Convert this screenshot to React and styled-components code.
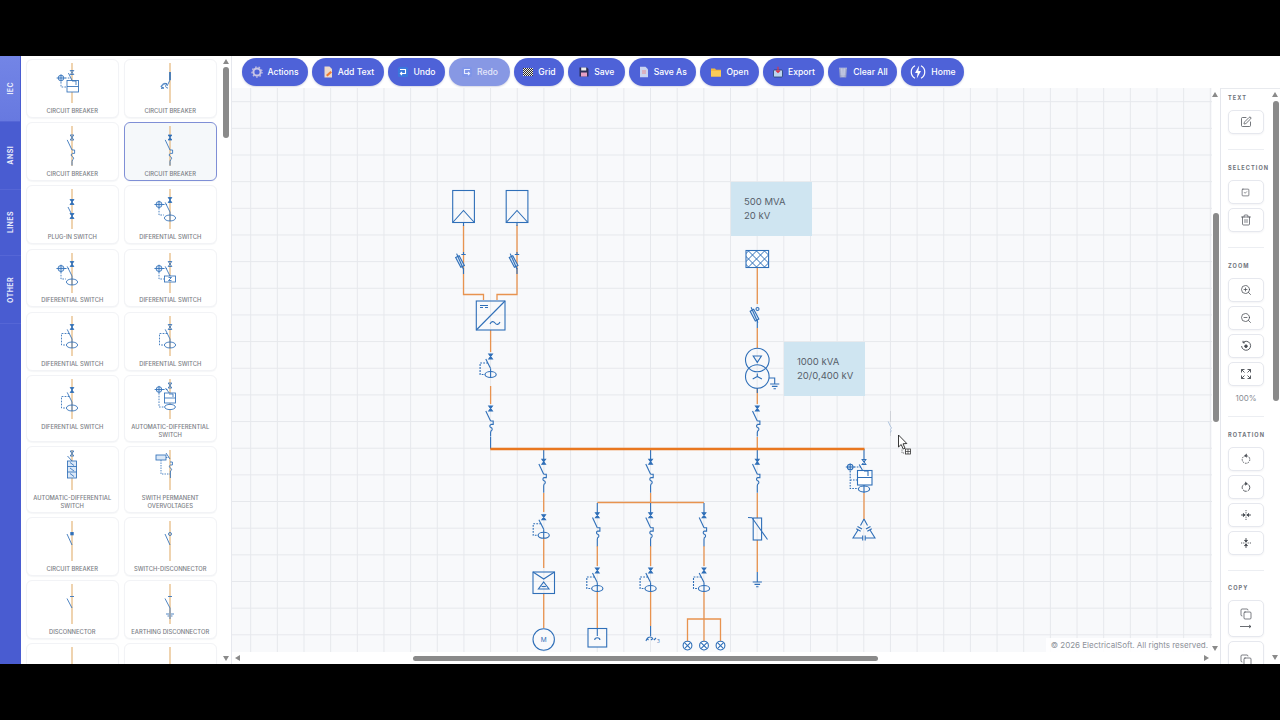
import React from "react";
import styled, { createGlobalStyle } from "styled-components";
import { SquarePen, SquareCheck, Trash2, ZoomIn, ZoomOut, Copy } from "lucide-react";

const BLUE = "#2f6fb8";
const ORANGE = "#e8934f";
const FONT = `Inter, "Liberation Sans", sans-serif`;

const Global = createGlobalStyle`
  html, body { margin: 0; padding: 0; background: #000; }
  body { font-family: ${FONT}; }
  #root { width: 1280px; height: 720px; overflow: hidden; }
`;

const Page = styled.div`
  width: 1280px; height: 720px; background: #000; padding: 56px 0; box-sizing: border-box;
`;
const Frame = styled.div`
  display: flex; height: 608px; background: #fff; overflow: hidden;
`;
const Tabs = styled.nav`
  width: 21px; flex: none; background: #495cd1; display: flex; flex-direction: column;
`;
const Tab = styled.div`
  height: ${p => p.$h}px; width: ${p => (p.$active ? 20 : 21)}px; flex: none;
  background: ${p => (p.$active ? "linear-gradient(#7385e6,#6779e0)" : "#495cd1")};
  border-bottom: 1px solid #5566d6; box-sizing: border-box;
  display: flex; align-items: center; justify-content: center;
`;
const TabLabel = styled.span`
  writing-mode: vertical-rl; transform: rotate(180deg);
  color: #e9ecfb; font-size: 7px; font-weight: 700; letter-spacing: .4px;
`;
const Palette = styled.aside`
  position: relative; width: 211px; flex: none; overflow: hidden; background: #fff;
  border-right: 1px solid #e6e8ee; box-sizing: border-box;
`;
const CardGrid = styled.div`
  display: grid; grid-template-columns: 93.5px 93.5px; column-gap: 4.5px; row-gap: 4.4px;
  padding: 3px 0 0 4.5px; align-items: stretch;
`;
const Card = styled.div`
  background: ${p => (p.$selected ? "#f5f8fa" : "#fff")};
  border: 1px solid ${p => (p.$selected ? "#7f8fd6" : "#f2f3f6")};
  border-radius: 6px; box-sizing: border-box; padding: 3px 2px 1.8px;
  display: flex; flex-direction: column; align-items: center;
  box-shadow: 0 1px 1px rgba(30,40,80,.04);
  min-height: 58.8px;
`;
const CardLabel = styled.div`
  margin-top: 3.8px; font-size: 5.8px; line-height: 8px; color: #7b7e85; text-align: center;
  font-weight: 500; letter-spacing: 0; text-transform: uppercase;
`;
const Workspace = styled.main`
  flex: 1; min-width: 0; display: flex; flex-direction: column;
`;
const Toolbar = styled.div`
  height: 32px; flex: none; display: flex; align-items: center; gap: 4px; padding: 0 0 0 10px;
  background: #fff; box-sizing: border-box;
`;
const ToolButton = styled.button`
  width: ${p => p.$w}px; height: 28px; flex: none; border: 0; border-radius: 14px; padding: 0;
  background: ${p => (p.$dim ? "#8798e4" : "#4e62d8")}; color: ${p => (p.$dim ? "#e3e7fa" : "#fff")};
  font: 500 8.6px ${FONT}; display: flex; align-items: center; justify-content: center; gap: 4px;
  box-shadow: 0 1px 2px rgba(40,50,120,.2);
`;
const WorkRow = styled.div`
  flex: 1; min-height: 0; display: flex;
`;
const Canvas = styled.div`
  position: relative; flex: 1; min-width: 0; overflow: hidden; background-color: #f8f9fb;
  background-image: linear-gradient(to right, #e6e8ec 1px, transparent 1px),
    linear-gradient(to bottom, #e6e8ec 1px, transparent 1px);
  background-size: 26.667px 26.667px;
  background-position: 18.2px 13.2px;
  border-right: 8px solid #fff; border-bottom: 0;
`;
const Drawing = styled.svg`
  position: absolute; left: 0; top: 0; display: block;
`;
const Note = styled.div`
  position: absolute; left: ${p => p.$x}px; top: ${p => p.$y}px; width: 80.5px; height: 54px;
  background: #cfe5f1; color: #56606a; font-size: 9.5px; line-height: 14px;
  padding: 12.5px 0 0 13px; box-sizing: border-box; white-space: pre;
`;
const Copyright = styled.div`
  position: absolute; right: 0; bottom: 12px; height: 14px; padding: 0 4px 0 5px;
  background: rgba(255,255,255,.85); color: #8d9199; font-size: 8px; line-height: 14px; white-space: nowrap;
`;
const HBar = styled.div`
  position: absolute; left: 0; right: 0; bottom: 0; height: 12px; background: #fff;
`;
const HThumb = styled.div`
  position: absolute; left: 181px; top: 4px; width: 465px; height: 5px; border-radius: 3px; background: #8a8a8a;
`;
const Thumb = styled.div`
  position: absolute; left: ${p => p.$x}px; top: ${p => p.$y}px; width: 6px; height: ${p => p.$h}px;
  border-radius: 3px; background: #8a8a8a;
`;
const Arrow = styled.div`
  position: absolute; left: ${p => p.$x}px; top: ${p => p.$y}px; width: 0; height: 0;
  border-left: 3.5px solid transparent; border-right: 3.5px solid transparent;
  ${p => (p.$down ? "border-top: 5px solid #8a8a8a;" : "border-bottom: 5px solid #8a8a8a;")}
`;
const ArrowRight = styled.div`
  position: absolute; left: ${p => p.$x}px; top: ${p => p.$y}px; width: 0; height: 0;
  border-top: 3.5px solid transparent; border-bottom: 3.5px solid transparent;
  ${p => (p.$left ? "border-right: 5px solid #8a8a8a;" : "border-left: 5px solid #8a8a8a;")}
`;
const Panel = styled.aside`
  position: relative; width: 60px; flex: none; background: #fff; overflow: hidden;
  border-left: 1px solid #e4e6ec; border-top: 1px solid #e8eaee; box-sizing: border-box; padding: 5px 16px 0 7px;
`;
const Section = styled.section`
  padding-bottom: ${p => (p.$last ? 0 : 15)}px; margin-bottom: ${p => (p.$tight ? 13 : 14)}px;
  border-bottom: ${p => (p.$last ? "none" : "1px solid #eceef2")};
  display: flex; flex-direction: column; gap: 4px;
`;
const SectionTitle = styled.div`
  font-size: 5.6px; line-height: 8px; font-weight: 700; letter-spacing: 1.05px; color: #70747c;
  margin-bottom: 4px; white-space: nowrap;
`;
const PanelButton = styled.button`
  width: 35.5px; height: ${p => p.$h || 24}px; flex: none; padding: 0; background: #fff;
  border: 1px solid #e6e8ee; border-radius: 5px; display: flex; flex-direction: column;
  align-items: center; justify-content: center; gap: 4px; color: #454950;
  box-shadow: 0 1px 2px rgba(30,40,80,.05);
`;
const ZoomValue = styled.div`
  height: 12px; margin-top: 2px; margin-bottom: -3px; font-size: 8px; line-height: 12px; color: #8a8d94; text-align: center;
`;

/* ---------- electrical symbols ---------- */
const Mark = ({ x, y, filled }) => (
  <path d={`M${x - 1.8} ${y - 2.5}h3.6l-3.6 5h3.6z`} fill={filled ? BLUE : "none"} />
);
const Blade = ({ x, y, e = 12 }) => <path d={`M${x - 4.8} ${y + 2.4}L${x} ${y + e}`} />;
const Thermal = ({ x, y, end = 31 }) => (
  <path d={`M${x} ${y + 12.5}h2.6v3.4h-2.2c-1.6.6-1.6 2.6 0 3.2c1.6.6 1.6 2.8 0 3.4L${x} ${y + 24}V${y + end}`} />
);
const Breaker = ({ x, y, filled = true, end }) => (
  <g>
    <Mark x={x} y={y} filled={filled} />
    <Blade x={x} y={y} e={12.5} />
    <Thermal x={x} y={y} end={end} />
  </g>
);
const Rcd = ({ x, y, filled = true, dashed = true }) => (
  <g>
    <Mark x={x} y={y} filled={filled} />
    <Blade x={x} y={y} />
    <path d={`M${x} ${y + 12}V${y + 21}`} />
    <ellipse cx={x} cy={y + 18} rx="5.6" ry="3" fill="none" />
    {dashed && <path d={`M${x - 2.6} ${y + 6.5}H${x - 10.5}V${y + 18}H${x - 5.6}`} strokeDasharray="1.8 1.2" />}
  </g>
);
const Fuse = ({ x, y }) => (
  <g>
    <rect x={x - 2} y={y} width="4" height="11" transform={`rotate(-28 ${x} ${y + 5.5})`} fill="#d8e6f6" />
    <path d={`M${x - 3.4} ${y - 2.4}L${x + 3.4} ${y + 13}`} />
  </g>
);
const CrossCircle = ({ x, y, r = 3.4 }) => (
  <g>
    <circle cx={x} cy={y} r={r} fill="#d8e6f6" />
    <path d={`M${x - r - 1.6} ${y}h${2 * r + 3.2}M${x} ${y - r - .8}v${2 * r + 1.6}`} />
  </g>
);
const Earth = ({ x, y }) => <path d={`M${x - 4.6} ${y}h9.2M${x - 2.8} ${y + 2.4}h5.6M${x - 1.2} ${y + 4.8}h2.4`} />;
const Lamp = ({ x, y }) => (
  <g>
    <circle cx={x} cy={y} r="4.4" fill="#fff" />
    <path d={`M${x - 3} ${y - 3}l6 6M${x + 3} ${y - 3}l-6 6`} />
  </g>
);

const orangeWires = [
  "M463.5 225V294.5H483.5V300", "M517 225V294.5H497V300", "M490.6 330V352", "M490.6 386V404",
  "M757.3 268V304", "M757.3 328V348", "M757.3 388V404", "M757.3 437V449",
  "M543.7 493V512", "M543.7 537V568", "M543.7 593V628",
  "M597.3 502.5H704", "M650.6 493V503", "M597.3 546V566", "M597.3 591V628",
  "M650.6 546V566", "M650.6 591V626", "M704 546V566", "M704 591V641",
  "M687.5 641V619H720.5V641", "M757.3 493V518", "M757.3 540V572", "M864 493V519",
];
const blueWires = [
  "M463.5 222V226", "M517 222V226",
  "M463.5 268V274", "M517 268V274",
  "M543.7 449V460", "M650.6 449V460", "M757.3 449V460", "M864 449V460",
  "M757.3 320V328", "M757.3 572V582", "M650.6 626V636",
  "M597.3 503V513", "M704 503V513", "M650.6 503V513",
  "M490.6 437V449", "M757.3 388V393",
];
const meshLines = [-14, -6, 2, 10, 18, 26, 34].map(k => `M${746 + k} 250.5l17 17M${746 + k + 17} 250.5l-17 17`).join("");

const SchematicDrawing = () => (
  <Drawing width="980" height="576" viewBox="232 88 980 576">
    <defs>
      <clipPath id="mesh"><rect x="746" y="250.5" width="22.6" height="17" /></clipPath>
    </defs>
    <g fill="none" stroke={ORANGE} strokeWidth="1.3">
      {orangeWires.map((d, i) => <path key={i} d={d} />)}
    </g>
    <g fill="none" stroke={BLUE} strokeWidth="1.1">
      {blueWires.map((d, i) => <path key={i} d={d} />)}
      {/* PV generators */}
      <rect x="452.7" y="190.5" width="21.7" height="32" />
      <path d="M452.7 222.5L463.5 210.5L474.4 222.5" />
      <rect x="506.2" y="190.5" width="21.7" height="32" />
      <path d="M506.2 222.5L517 210.5L527.9 222.5" />
      <path d="M463.5 252v2M461.3 254.5h4.4M517 252v2M514.8 254.5h4.4" />
      <Fuse x={460} y={256} />
      <Fuse x={513.6} y={256} />
      {/* Inverter */}
      <rect x="476.3" y="301" width="28.7" height="29" />
      <path d="M476.3 330L505 301" />
      <path d="M480 305.5h8M480 307.5h3M485 307.5h3" />
      <path d="M490 324c1.5-3 3.5-3 5-1s3.5 2 5-1" />
      <Rcd x={490.6} y={356.5} />
      <Breaker x={490.6} y={408.5} end={28} />
      {/* Source branch */}
      <rect x="746" y="250.5" width="22.6" height="17" fill="#fff" />
      <path d={meshLines} clipPath="url(#mesh)" strokeWidth="1" />
      <circle cx="757.5" cy="309" r="1.5" />
      <Fuse x={754.5} y={309.6} />
      <circle cx="757.3" cy="360" r="11.8" />
      <circle cx="757.3" cy="376.5" r="11.8" />
      <path d="M753.2 356h8.2l-4.1 6.4z" />
      <path d="M757.3 376.5v-3M757.3 376.5l-4.6 2.6M757.3 376.5l4.6 2.6M769 378H774.7V384" />
      <Earth x={774.7} y={384} />
      <Breaker x={757.3} y={408.5} end={28} />
      {/* Column A */}
      <Breaker x={543.7} y={461.7} />
      <Rcd x={543.7} y={517.3} />
      <rect x="533" y="572" width="21.5" height="21.5" />
      <path d="M533 572L543.7 579L554.5 572" />
      <path d="M543.7 582l5.3 7h-10.6z" />
      <path d="M541.5 586.5h4.4" />
      <circle cx="543.7" cy="639.5" r="10.7" fill="#f8f9fb" />
      {/* Column B */}
      <Breaker x={597.3} y={515.2} />
      <Rcd x={597.3} y={570.5} />
      <rect x="588" y="628.5" width="18.7" height="18.5" fill="#f8f9fb" />
      <path d="M597.3 628.5V636M594.7 640c0-3 5.2-3 5.2 0" />
      {/* Column C */}
      <Breaker x={650.6} y={461.7} />
      <Breaker x={650.6} y={515.2} />
      <Rcd x={650.6} y={570.5} />
      <path d="M646 641c1-4 3-4 4.6-4M650.6 637c1 0 2 1 2.5 2.5M654 640l2-2M647.5 639l1 1M651 639l1 1" />
      {/* Column D */}
      <Breaker x={704} y={515.2} />
      <Rcd x={704} y={570.5} />
      <Lamp x={687.5} y={645.6} />
      <Lamp x={704} y={645.6} />
      <Lamp x={720.5} y={645.6} />
      {/* Column E */}
      <Breaker x={757.3} y={461.7} />
      <rect x="753.2" y="518" width="8.4" height="22" />
      <path d="M748 517.5l4 .2L767.5 539.5" />
      <Earth x={757.3} y={582} />
      {/* Column F */}
      <path d="M862.2 459.5h3.6l-3.6 5h3.6z" />
      <path d="M859.2 464.5L864 473V471" />
      <CrossCircle x={850.2} y={467} r={2.8} />
      <path d="M854 467H861M850.2 471V488.5H858.4M850.2 480H857" strokeDasharray="1.6 1.2" />
      <rect x="857.5" y="470.5" width="14.5" height="14.5" fill="#fff" />
      <path d="M857.5 477.5H872M864 471h4v5" />
      <path d="M864 485V493" />
      <ellipse cx="864" cy="489" rx="5.6" ry="3" />
      <path d="M864 519L860.5 525.5M858 530L853 538H862.7M865.2 538H875L870 530M867.5 525.5L864 519" />
      <path d="M857.5 526.5L862 529M856.2 528.7L860.7 531.2M870.5 526.5L866 529M871.8 528.7L867.3 531.2M862.7 535.5V540.5M865.2 535.5V540.5" />
    </g>
    <path d="M490.3 449H864.5" stroke="#e9771f" strokeWidth="2.6" fill="none" />
    <text x="543.7" y="642" fontSize="6.5" textAnchor="middle" fill={BLUE} fontFamily={FONT}>M</text>
    <text x="657" y="643" fontSize="4.5" fill={BLUE} fontFamily={FONT}>3</text>
    {/* ghost being dragged */}
    <g fill="none" strokeWidth=".8">
      <path d="M890.5 411V422M890.5 431V436" stroke="#c9ccd2" />
      <path d="M888.2 421.5L890.5 426.5c2 1 .5 2 0 3c1 1 .5 2 0 3" stroke="#9db8d8" />
    </g>
    {/* pointer */}
    <path d="M898.5 435V447L901.2 444.5L903.2 449L905 448.2L903 443.8L906.8 443.5Z" fill="#fff" stroke="#222" strokeWidth=".9" strokeLinejoin="round" />
    <path d="M902 449.5V453H906" fill="none" stroke="#333" strokeWidth=".7" strokeDasharray="1.2 1" />
    <rect x="905.5" y="449" width="5" height="5" fill="#fff" stroke="#333" strokeWidth=".8" />
    <path d="M908 449v5M905.5 451.5h5" stroke="#333" strokeWidth=".7" />
  </Drawing>
);

/* ---------- palette icons ---------- */
const palette = {
  shunt: (
    <g>
      <CrossCircle x={19} y={15} r={2.8} />
      <path d="M23 15H29M19 19V24H25" strokeDasharray="1.6 1.2" />
      <path d="M28.2 7.5h3.6l-3.6 4h3.6zM26.4 10l4 8" />
      <rect x="25" y="17.5" width="11.5" height="11.5" fill="#fff" />
      <path d="M25 23.5H36.5M30 18h4v4" />
    </g>
  ),
  coil: (
    <g>
      <path d="M30 9V17L27 23" />
      <path d="M28 25c-3 0-3-3-1-4c-3-1-5 2-5.5 3M27 21c-3-2-6 1-6 3l3 1-3 .5" />
      <path d="M30 9v8" strokeWidth="1.4" />
    </g>
  ),
  tx: <Breaker x={30} y={11.5} filled={false} end={28} />,
  tf: <Breaker x={30} y={11.5} end={28} />,
  plug: (
    <g>
      <path d="M28 10.5h4l-2 2.5l2 2.5h-4l2-2.5z" fill={BLUE} />
      <path d="M26 18L30 26" />
      <path d="M28 24.5h4l-2 2.5l2 2.5h-4l2-2.5z" fill={BLUE} />
    </g>
  ),
  diffCross: (
    <g>
      <Rcd x={30} y={11} dashed={false} />
      <CrossCircle x={19} y={15.5} r={3} />
      <path d="M19 19V26H24" strokeDasharray="1.6 1.2" />
      <path d="M23 15.5H27" strokeDasharray="1.6 1.2" />
    </g>
  ),
  diffBox: (
    <g>
      <Mark x={30} y={11} />
      <Blade x={30} y={11} />
      <CrossCircle x={19} y={15.5} r={3} />
      <path d="M23 15.5H27M19 19V26H24" strokeDasharray="1.6 1.2" />
      <rect x="24.5" y="23" width="11" height="6" fill="#fff" />
      <path d="M28.5 24.5h3l-3 3h3" />
    </g>
  ),
  rcd: <Rcd x={30} y={11} filled={false} />,
  rcd2: <Rcd x={30} y={11} />,
  autoShunt: (
    <g>
      <Mark x={30} y={6.5} />
      <path d="M25.5 9L30 15" />
      <CrossCircle x={19} y={10.5} r={2.8} />
      <path d="M23 10.5H28M19 14V28H24" strokeDasharray="1.6 1.2" />
      <rect x="24.5" y="14" width="11" height="10" fill="#fff" />
      <path d="M24.5 19H35.5M29 15h4v3" />
      <ellipse cx="30" cy="28" rx="5.4" ry="2.6" fill="#fff" />
    </g>
  ),
  autoBox: (
    <g>
      <Mark x={30} y={3.5} />
      <path d="M25.5 6L30 11" />
      <rect x="25.5" y="11" width="9" height="17" fill="#dbe8f7" />
      <path d="M25.5 16.5H34.5M25.5 22H34.5M28 12.5l4 3M28 18l4 3M28 23.5l4 3" />
    </g>
  ),
  over: (
    <g>
      <rect x="16" y="5" width="10" height="5" fill="#dbe8f7" />
      <path d="M26 7.5H29M21 10V24H30" strokeDasharray="1.4 1.1" />
      <path d="M26 3L30 9" />
      <path d="M30 12h2.4v3h-2c-1.4.6-1.4 2.4 0 3c1.6.6 1.6 2.4 0 3V28" />
    </g>
  ),
  dot: (
    <g>
      <rect x="28.8" y="11.5" width="2.4" height="2.4" fill={BLUE} />
      <path d="M25 13L30 24" />
    </g>
  ),
  dotRound: (
    <g>
      <circle cx="30" cy="13" r="1.5" />
      <path d="M25 13L30 24" />
    </g>
  ),
  disc: <path d="M28 12.5H32M25 14.5L30 24" />,
  earth: (
    <g>
      <path d="M28 12.5H32M25 14.5L30 24V29" />
      <path d="M26 30h8M27.5 32h5M29 34h2" />
    </g>
  ),
  cut: <path d="M25 34L30 24" />,
};

const SymbolIcon = ({ kind }) => (
  <svg width="60" height="40" viewBox="0 0 60 40">
    <path d="M30 0V40" stroke="#e5b67a" strokeWidth="1.2" fill="none" />
    <g fill="none" stroke={BLUE} strokeWidth=".85">{palette[kind]}</g>
  </svg>
);

const cards = [
  ["CIRCUIT BREAKER", "shunt"], ["CIRCUIT BREAKER", "coil"],
  ["CIRCUIT BREAKER", "tx"], ["CIRCUIT BREAKER", "tf", true],
  ["PLUG-IN SWITCH", "plug"], ["DIFERENTIAL SWITCH", "diffCross"],
  ["DIFERENTIAL SWITCH", "diffCross"], ["DIFERENTIAL SWITCH", "diffBox"],
  ["DIFERENTIAL SWITCH", "rcd2"], ["DIFERENTIAL SWITCH", "rcd"],
  ["DIFERENTIAL SWITCH", "rcd2"], ["AUTOMATIC-DIFFERENTIAL SWITCH", "autoShunt"],
  ["AUTOMATIC-DIFFERENTIAL SWITCH", "autoBox"], ["SWITH PERMANENT OVERVOLTAGES", "over"],
  ["CIRCUIT BREAKER", "dot"], ["SWITCH-DISCONNECTOR", "dotRound"],
  ["DISCONNECTOR", "disc"], ["EARTHING DISCONNECTOR", "earth"],
  ["", "cut"], ["", "cut"],
];

/* ---------- toolbar icons ---------- */
const Ico = ({ children, w = 12 }) => <svg width={w} height="12" viewBox="0 0 12 12">{children}</svg>;
const toolIcons = {
  actions: (
    <Ico>
      <circle cx="6" cy="6" r="3.6" fill="none" stroke="#c9c6e6" strokeWidth="2" />
      <circle cx="6" cy="6" r="5" fill="none" stroke="#bdbade" strokeWidth="1.4" strokeDasharray="1.6 1.9" />
    </Ico>
  ),
  text: (
    <Ico>
      <path d="M2.5 .5h5l2.5 2.5v8.5h-7.5z" fill="#ecd9c9" />
      <path d="M4 9l4.5-4 1.5 1.5-4.5 4z" fill="#ec7b33" />
    </Ico>
  ),
  undo: (
    <Ico>
      <rect x="1" y="1" width="10" height="10" rx="1.5" fill="#3a78dc" />
      <path d="M3 3.5h5.5v4H3.6M5 6l-1.6 1.5L5 9" fill="none" stroke="#fff" strokeWidth="1.1" />
    </Ico>
  ),
  redo: (
    <Ico>
      <rect x="1" y="1" width="10" height="10" rx="1.5" fill="#7f95e8" />
      <path d="M9 3.5H3.5v4h4.9M7 6l1.6 1.5L7 9" fill="none" stroke="#e6ecff" strokeWidth="1.1" />
    </Ico>
  ),
  grid: (
    <Ico>
      <rect x="1" y="2" width="10" height="8" fill="#eee" />
      <path d="M1 2.5h10M2 3.5h9M1 4.5h10M2 5.5h9M1 6.5h10M2 7.5h9M1 8.5h10M2 9.5h9" stroke="#2a2a2a" strokeWidth="1" strokeDasharray="1 1" />
    </Ico>
  ),
  save: (
    <Ico>
      <path d="M1.5 1.5h7.5l1.5 1.5v7.5h-9z" fill="#2b2f58" />
      <rect x="3.2" y="1.5" width="5" height="3" fill="#eee" />
      <rect x="3" y="6.5" width="6" height="4" fill="#e7a0c4" />
    </Ico>
  ),
  saveAs: (
    <Ico>
      <path d="M2 .8h5.5l2.5 2.5v8H2z" fill="#c9d3f0" />
      <path d="M4 5h4M4 7h4" stroke="#e88" strokeWidth=".9" />
    </Ico>
  ),
  open: (
    <Ico>
      <path d="M1 2.5h4l1 1.3h5v6.7H1z" fill="#f4b93c" />
      <path d="M1 5h10v5.5H1z" fill="#f9cb58" />
    </Ico>
  ),
  export: (
    <Ico>
      <rect x="1.5" y="4" width="9" height="7" rx="1" fill="#bcd6ee" stroke="#24406e" strokeWidth=".8" />
      <path d="M6 .8V6.5M4 4.5l2 2 2-2" fill="none" stroke="#d9364e" strokeWidth="1.2" />
    </Ico>
  ),
  clear: (
    <Ico>
      <path d="M2 2h8l-.8 9.5H2.8z" fill="#9aa2c8" />
      <path d="M2 2h8M3 4h6M3.2 6h5.6M3.4 8h5.2M4.5 2.5l.5 8.5M7.5 2.5l-.5 8.5M6 2.5v8.5" stroke="#dfe2f3" strokeWidth=".5" />
    </Ico>
  ),
  home: (
    <svg width="18" height="18" viewBox="0 0 18 18">
      <path d="M6 2.8A7 7 0 0 0 6 15.2M12 2.8A7 7 0 0 1 12 15.2" fill="none" stroke="#fff" strokeWidth="1.2" />
      <path d="M10.2 2.5L6 10h2.6L7.8 15.5 12 8H9.4z" fill="#fff" />
    </svg>
  ),
};
const tools = [
  ["Actions", "actions", 66], ["Add Text", "text", 72], ["Undo", "undo", 57], ["Redo", "redo", 61, true],
  ["Grid", "grid", 50], ["Save", "save", 56.5], ["Save As", "saveAs", 67.5], ["Open", "open", 59],
  ["Export", "export", 61], ["Clear All", "clear", 69], ["Home", "home", 63],
];

/* ---------- panel icons ---------- */
const P = ({ children, w = 12, h = 12 }) => (
  <svg width={w} height={h} viewBox="0 0 12 12" fill="none" stroke="#454950" strokeWidth=".9">{children}</svg>
);
const Expand = () => (
  <P>
    <path d="M1.5 4.5v-3h3M1.5 1.5l3 3M10.5 4.5v-3h-3M10.5 1.5l-3 3M1.5 7.5v3h3M1.5 10.5l3-3M10.5 7.5v3h-3M10.5 10.5l-3-3" />
  </P>
);
const ResetZoom = () => (
  <P>
    <path d="M3 2.5A4.5 4.5 0 1 1 1.6 6M3 .8V2.8H5" />
    <circle cx="6" cy="6.2" r="1.3" fill="#454950" />
  </P>
);
const RotLeft = () => (
  <P>
    <circle cx="6" cy="6.5" r="3.8" strokeDasharray="1.6 1" />
    <path d="M6.8 1L4.8 2.7 6.8 4.2" fill="#454950" />
  </P>
);
const RotRight = () => (
  <P>
    <circle cx="6" cy="6.5" r="3.8" strokeDasharray="4 1" />
    <path d="M5.2 1l2 1.7-2 1.5" fill="#454950" />
  </P>
);
const FlipH = () => (
  <P>
    <path d="M6 1v10" strokeDasharray="1.2 1" />
    <path d="M1 6h3M11 6H8" />
    <path d="M3.4 4.5L5 6 3.4 7.5zM8.6 4.5L7 6l1.6 1.5z" fill="#454950" />
  </P>
);
const FlipV = () => (
  <P>
    <path d="M1 6h10" strokeDasharray="1.2 1" />
    <path d="M6 1v3M6 11V8" />
    <path d="M4.5 3.4L6 5l1.5-1.6zM4.5 8.6L6 7l1.5 1.6z" fill="#454950" />
  </P>
);
const ArrowLine = () => (
  <svg width="12" height="5" viewBox="0 0 12 5" fill="none" stroke="#454950" strokeWidth=".8">
    <path d="M0 2.5h11M9 1l2 1.5L9 4" />
  </svg>
);

const CanvasBarLayer = styled.div`
  position: absolute; left: 0; top: 0; width: 0; height: 0;
`;
function Overlay() {
  return (
    <CanvasBarLayer>
      <Arrow $x={1212} $y={92} />
      <Thumb $x={1213} $y={213} $h={209} />
      <Arrow $x={1212} $y={646} $down />
      <ArrowRight $x={235} $y={655} $left />
    </CanvasBarLayer>
  );
}

export default function App() {
  return (
    <Page>
      <Global />
      <Frame>
        <Tabs>
          <Tab $active $h={66}><TabLabel>IEC</TabLabel></Tab>
          <Tab $h={68}><TabLabel>ANSI</TabLabel></Tab>
          <Tab $h={66}><TabLabel>LINES</TabLabel></Tab>
          <Tab $h={68}><TabLabel>OTHER</TabLabel></Tab>
        </Tabs>
        <Palette>
          <CardGrid>
            {cards.map(([label, kind, selected], i) => (
              <Card key={i} $selected={selected}>
                <SymbolIcon kind={kind} />
                {label && <CardLabel>{label}</CardLabel>}
              </Card>
            ))}
          </CardGrid>
          <Arrow $x={202} $y={3} />
          <Thumb $x={202} $y={11} $h={71} />
          <Arrow $x={202} $y={600} $down />
        </Palette>
        <Workspace>
          <Toolbar>
            {tools.map(([label, icon, w, dim]) => (
              <ToolButton key={label} $w={w} $dim={dim}>
                {toolIcons[icon]}
                <span>{label}</span>
              </ToolButton>
            ))}
          </Toolbar>
          <WorkRow>
            <Canvas>
              <SchematicDrawing />
              <Note $x={499} $y={94}>{"500 MVA\n20 kV"}</Note>
              <Note $x={552} $y={254}>{"1000 kVA\n20/0,400 kV"}</Note>
              <HBar>
                <HThumb />
                <ArrowRight $x={972} $y={3} />
              </HBar>
              <Copyright>© 2026 ElectricalSoft. All rights reserved.</Copyright>
            </Canvas>
            <Panel>
              <Section>
                <SectionTitle>TEXT</SectionTitle>
                <PanelButton><SquarePen size={12} strokeWidth={1.5} /></PanelButton>
              </Section>
              <Section>
                <SectionTitle>SELECTION</SectionTitle>
                <PanelButton><SquareCheck size={9} strokeWidth={1.7} /></PanelButton>
                <PanelButton><Trash2 size={12} strokeWidth={1.4} /></PanelButton>
              </Section>
              <Section>
                <SectionTitle>ZOOM</SectionTitle>
                <PanelButton><ZoomIn size={12} strokeWidth={1.5} /></PanelButton>
                <PanelButton><ZoomOut size={12} strokeWidth={1.5} /></PanelButton>
                <PanelButton><ResetZoom /></PanelButton>
                <PanelButton><Expand /></PanelButton>
                <ZoomValue>100%</ZoomValue>
              </Section>
              <Section $tight>
                <SectionTitle>ROTATION</SectionTitle>
                <PanelButton><RotLeft /></PanelButton>
                <PanelButton><RotRight /></PanelButton>
                <PanelButton><FlipH /></PanelButton>
                <PanelButton><FlipV /></PanelButton>
              </Section>
              <Section $last>
                <SectionTitle>COPY</SectionTitle>
                <PanelButton $h={37}><Copy size={12} strokeWidth={1.4} /><ArrowLine /></PanelButton>
                <PanelButton $h={37}><Copy size={12} strokeWidth={1.4} /></PanelButton>
              </Section>
              <Arrow $x={51} $y={3} />
              <Thumb $x={52} $y={12} $h={300} />
              <Arrow $x={51} $y={566} $down />
            </Panel>
          </WorkRow>
        </Workspace>
      </Frame>
      <Overlay />
    </Page>
  );
}
